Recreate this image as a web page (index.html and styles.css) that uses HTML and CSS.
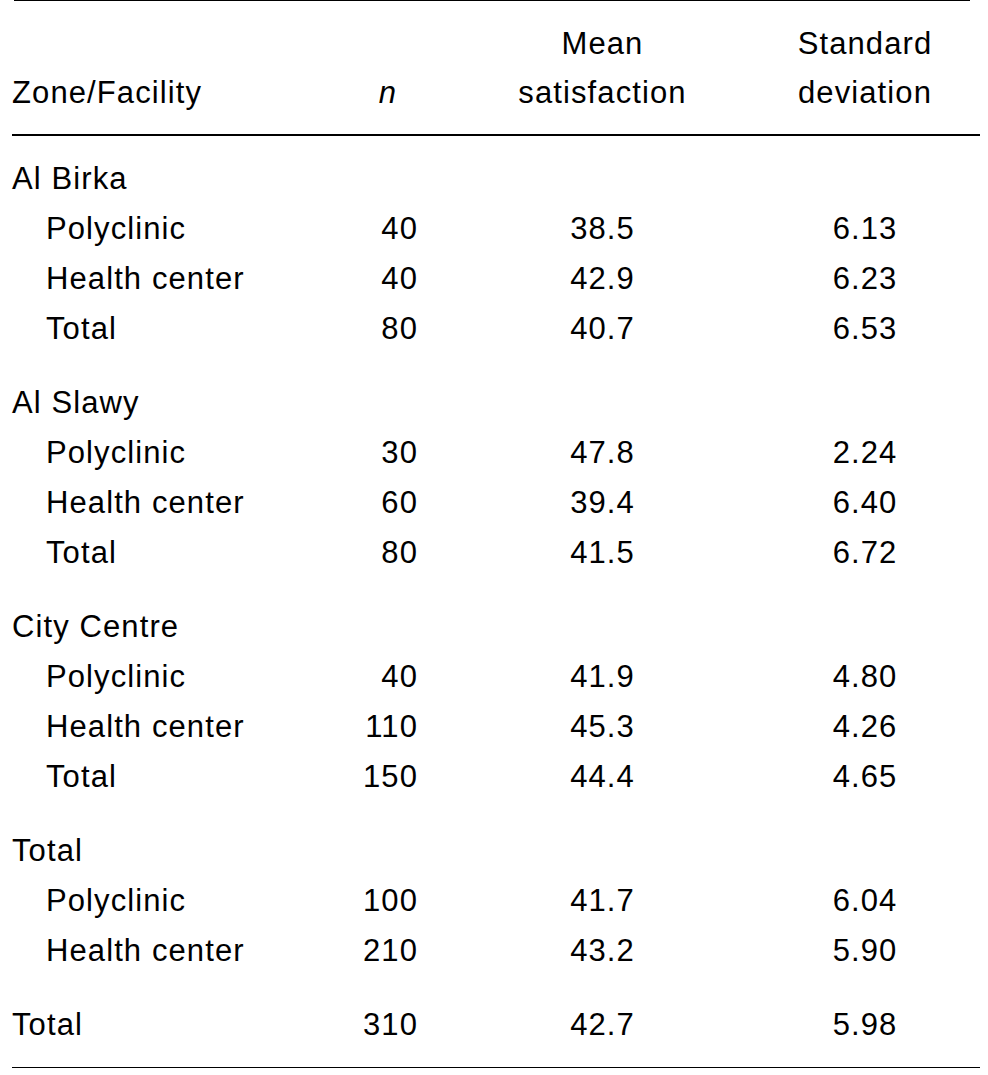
FILE: index.html
```html
<!DOCTYPE html>
<html lang="en">
<head>
<meta charset="utf-8">
<title>Satisfaction by zone and facility</title>
<link rel="stylesheet" href="styles.css">
</head>
<body>
<div class="top-rule"></div>
<table class="stats">
  <colgroup>
    <col class="c-label">
    <col class="c-n">
    <col class="c-mean">
    <col class="c-sd">
    <col class="c-pad">
  </colgroup>
  <thead>
    <tr>
      <th class="h-label"><span class="hl">&nbsp;</span><span class="hl">Zone/Facility</span></th>
      <th class="h-n"><span class="hl">&nbsp;</span><span class="hl"><i>n</i></span></th>
      <th class="h-mid"><span class="hl">Mean</span><span class="hl">satisfaction</span></th>
      <th class="h-mid"><span class="hl">Standard</span><span class="hl">deviation</span></th>
      <th></th>
    </tr>
  </thead>
  <tbody class="group">
    <tr class="zone"><td>Al Birka</td><td></td><td></td><td></td><td></td></tr>
    <tr><td class="sub">Polyclinic</td><td class="num">40</td><td class="mid">38.5</td><td class="mid">6.13</td><td></td></tr>
    <tr><td class="sub">Health center</td><td class="num">40</td><td class="mid">42.9</td><td class="mid">6.23</td><td></td></tr>
    <tr><td class="sub">Total</td><td class="num">80</td><td class="mid">40.7</td><td class="mid">6.53</td><td></td></tr>
  </tbody>
  <tbody class="group">
    <tr class="zone"><td>Al Slawy</td><td></td><td></td><td></td><td></td></tr>
    <tr><td class="sub">Polyclinic</td><td class="num">30</td><td class="mid">47.8</td><td class="mid">2.24</td><td></td></tr>
    <tr><td class="sub">Health center</td><td class="num">60</td><td class="mid">39.4</td><td class="mid">6.40</td><td></td></tr>
    <tr><td class="sub">Total</td><td class="num">80</td><td class="mid">41.5</td><td class="mid">6.72</td><td></td></tr>
  </tbody>
  <tbody class="group">
    <tr class="zone"><td>City Centre</td><td></td><td></td><td></td><td></td></tr>
    <tr><td class="sub">Polyclinic</td><td class="num">40</td><td class="mid">41.9</td><td class="mid">4.80</td><td></td></tr>
    <tr><td class="sub">Health center</td><td class="num">110</td><td class="mid">45.3</td><td class="mid">4.26</td><td></td></tr>
    <tr><td class="sub">Total</td><td class="num">150</td><td class="mid">44.4</td><td class="mid">4.65</td><td></td></tr>
  </tbody>
  <tbody class="group">
    <tr class="zone"><td>Total</td><td></td><td></td><td></td><td></td></tr>
    <tr><td class="sub">Polyclinic</td><td class="num">100</td><td class="mid">41.7</td><td class="mid">6.04</td><td></td></tr>
    <tr><td class="sub">Health center</td><td class="num">210</td><td class="mid">43.2</td><td class="mid">5.90</td><td></td></tr>
  </tbody>
  <tbody class="group last">
    <tr><td>Total</td><td class="num">310</td><td class="mid">42.7</td><td class="mid">5.98</td><td></td></tr>
  </tbody>
</table>
</body>
</html>
```
FILE: styles.css
```css
html, body {
  margin: 0;
  padding: 0;
  background: #ffffff;
}

body {
  color: #000000;
  font-family: "Liberation Sans", Arial, Helvetica, sans-serif;
  font-size: 31px;
  letter-spacing: 1.1px;
  line-height: 50px;
}

.top-rule {
  height: 1px;
  background: #000000;
  margin: 0 18px 0 14px;
}

.stats {
  border-collapse: collapse;
  table-layout: fixed;
  width: 968px;
  margin: 0 0 0 12px;
  border-bottom: 1px solid #000000;
}

.c-label { width: 318px; }
.c-n { width: 88px; }
.c-mean { width: 369px; }
.c-sd { width: 156px; }
.c-pad { width: 37px; }

.stats th,
.stats td {
  padding: 0;
  font-weight: normal;
  white-space: nowrap;
  height: 50px;
  vertical-align: middle;
}

.stats thead th {
  vertical-align: top;
  padding: 18px 0 17px 0;
  border-bottom: 2px solid #000000;
  line-height: 49px;
}

.hl {
  display: block;
}

.h-label { text-align: left; }
.h-n { text-align: right; padding-right: 21px !important; }
.h-mid { text-align: center; }

.stats tbody.group:first-of-type tr:first-child td {
  padding-top: 18px;
}

.group + .group tr:first-child td {
  padding-top: 24px;
}

.group.last tr:last-child td {
  padding-bottom: 17px;
}

.sub { padding-left: 34px !important; }
.num { text-align: right; }
.mid { text-align: center; }
```
